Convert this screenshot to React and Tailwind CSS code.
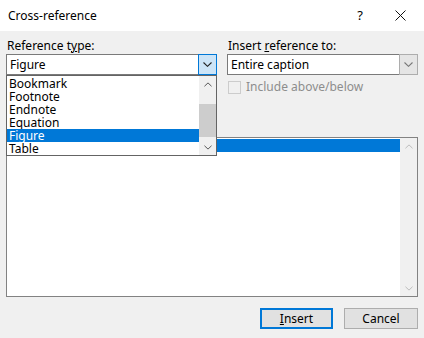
import React from "react";

const Chev = ({ up = false, color = "#333", w = 9, h = 5 }) => (
  <svg width={w} height={h} viewBox="0 0 9 5" fill="none">
    <path
      d={up ? "M0.5 4.5 L4.5 0.7 L8.5 4.5" : "M0.5 0.5 L4.5 4.3 L8.5 0.5"}
      stroke={color}
      strokeWidth="1.1"
    />
  </svg>
);

export default function App() {
  const items = ["Bookmark", "Footnote", "Endnote", "Equation", "Figure", "Table"];
  return (
    <div
      className="w-[424px] h-[338px] bg-[#f0f0f0] flex flex-col text-[12px] text-black overflow-hidden"
      style={{ fontFamily: '"Segoe UI", "Noto Sans", "Open Sans", sans-serif' }}
    >
      {/* Title bar */}
      <div className="h-[31px] bg-white flex items-center pl-[8px]">
        <span className="flex-1 text-[12px]">Cross-reference</span>
        <span className="w-[20px] text-center mr-[25px] text-[13px]">?</span>
        <svg width="11" height="11" viewBox="0 0 11 11" className="mr-[18px]">
          <path d="M0.5 0.5 L10.5 10.5 M10.5 0.5 L0.5 10.5" stroke="#111" strokeWidth="1" />
        </svg>
      </div>

      {/* Body */}
      <div className="flex flex-col px-[6px] pt-[6px]">
        <div className="flex gap-[10px]">
          {/* Left column */}
          <div className="w-[211px] flex flex-col relative">
            <div className="h-[17px] pl-[1px] leading-[17px]">
              Reference t<span className="underline">y</span>pe:
            </div>
            <div className="h-[21px] bg-white border border-[#7a7a7a] flex">
              <div className="flex-1 pl-[3px] leading-[19px]">Figure</div>
              <div className="w-[19px] -my-[1px] -mr-[1px] bg-[#cce4f7] border border-[#0078d7] flex items-center justify-center">
                <Chev color="#222" />
              </div>
            </div>
            {/* Dropdown list (overlay) */}
            <div className="absolute left-0 top-[38px] w-[211px] h-[81px] bg-white border border-[#646464] z-10 flex">
              <div className="flex-1 flex flex-col pt-[1px]">
                {items.map((it) => (
                  <div
                    key={it}
                    className={
                      "h-[13px] leading-[13px] pl-[2px] " +
                      (it === "Figure" ? "bg-[#0078d7] text-white" : "")
                    }
                  >
                    {it}
                  </div>
                ))}
              </div>
              <div className="w-[17px] bg-[#f0f0f0] flex flex-col items-center">
                <div className="h-[17px] flex items-center justify-center">
                  <Chev up color="#555" w={8} />
                </div>
                <div className="flex-1 w-full flex flex-col">
                  <div className="h-[11px]" />
                  <div className="h-[33px] w-full bg-[#cdcdcd]" />
                </div>
                <div className="h-[15px] flex items-center justify-center">
                  <Chev color="#555" w={8} />
                </div>
              </div>
            </div>
          </div>

          {/* Right column */}
          <div className="w-[191px] flex flex-col">
            <div className="h-[17px] pl-[1px] leading-[17px]">
              Insert <span className="underline">r</span>eference to:
            </div>
            <div className="h-[21px] bg-white border border-[#7a7a7a] flex">
              <div className="flex-1 pl-[3px] leading-[19px]">Entire caption</div>
              <div className="w-[19px] -my-[1px] -mr-[1px] bg-[#e5e5e5] border border-[#adadad] flex items-center justify-center">
                <Chev color="#777" />
              </div>
            </div>
            <div className="flex items-center mt-[5px] h-[14px]">
              <div className="w-[13px] h-[13px] ml-[1px] border border-[#cccccc] bg-[#f0f0f0]" />
              <span className="ml-[5px] text-[#8d8d8d]">Include above/below</span>
            </div>
          </div>
        </div>

        {/* Big list box */}
        <div className="mt-[43px] h-[160px] bg-white border border-[#828282] flex">
          <div className="flex-1 pt-[1px]">
            <div className="h-[13px] bg-[#0078d7]" />
          </div>
          <div className="w-[17px] bg-[#f0f0f0] flex flex-col items-center justify-between">
            <div className="h-[16px] flex items-center justify-center">
              <Chev up color="#bbb" w={8} />
            </div>
            <div className="h-[16px] flex items-center justify-center">
              <Chev color="#bbb" w={8} />
            </div>
          </div>
        </div>

        {/* Buttons */}
        <div className="flex justify-end gap-[11px] mt-[11px]">
          <div className="w-[73px] h-[21px] border-2 border-[#0078d7] bg-[#e1e1e1] flex items-center justify-center">
            <span>
              <span className="underline">I</span>nsert
            </span>
          </div>
          <div className="w-[74px] h-[21px] border border-[#adadad] bg-[#e1e1e1] flex items-center justify-center">
            Cancel
          </div>
        </div>
      </div>
    </div>
  );
}
